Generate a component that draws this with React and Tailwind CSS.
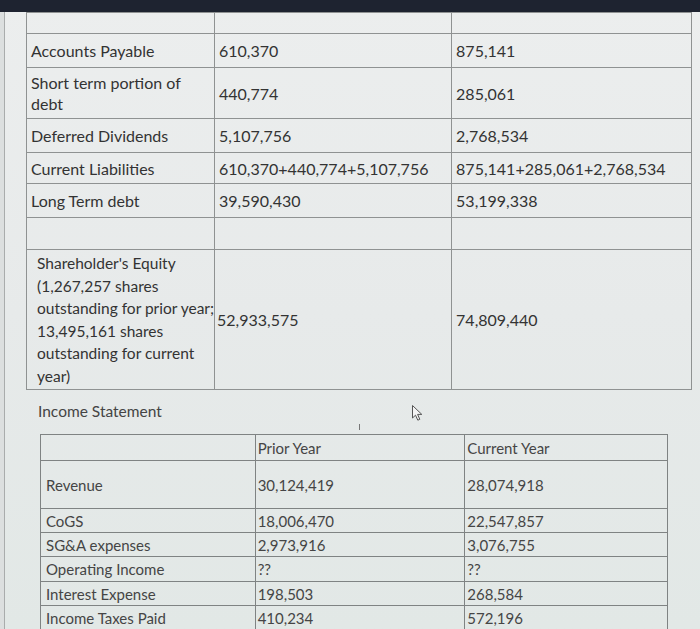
import React from 'react';

const balanceRows = [
  { label: '', prior: '', current: '', h: 'h-[21px]' },
  { label: 'Accounts Payable', prior: '610,370', current: '875,141', h: 'h-[34px]' },
  { label: 'Short term portion of debt', prior: '440,774', current: '285,061', h: 'h-[51px]' },
  { label: 'Deferred Dividends', prior: '5,107,756', current: '2,768,534', h: 'h-[34px]' },
  { label: 'Current Liabilities', prior: '610,370+440,774+5,107,756', current: '875,141+285,061+2,768,534', h: 'h-[31px]' },
  { label: 'Long Term debt', prior: '39,590,430', current: '53,199,338', h: 'h-[34px]' },
  { label: '', prior: '', current: '', h: 'h-[32px]' },
];

const incomeRows = [
  { label: '', prior: 'Prior Year', current: 'Current Year', h: 'h-[26px]' },
  { label: 'Revenue', prior: '30,124,419', current: '28,074,918', h: 'h-[48px]' },
  { label: 'CoGS', prior: '18,006,470', current: '22,547,857', h: 'h-[24px]' },
  { label: 'SG&A expenses', prior: '2,973,916', current: '3,076,755', h: 'h-[24px]' },
  { label: 'Operating Income', prior: '??', current: '??', h: 'h-[25px]' },
  { label: 'Interest Expense', prior: '198,503', current: '268,584', h: 'h-[24px]' },
  { label: 'Income Taxes Paid', prior: '410,234', current: '572,196', h: 'h-[24px]' },
];

const equityLines = [
  "Shareholder's Equity",
  '(1,267,257 shares',
  'outstanding for prior year;',
  '13,495,161 shares',
  'outstanding for current',
  'year)',
];

function Cursor() {
  return (
    <svg width="14" height="18" viewBox="0 0 14 18" className="absolute left-[411px] top-[404px]">
      <path d="M1.5 1.5 L1.5 14 L4.5 11.2 L6.8 16.2 L8.8 15.3 L6.6 10.4 L10.8 10.4 Z" fill="#f4f4f4" stroke="#555" strokeWidth="1" strokeLinejoin="round" />
    </svg>
  );
}

export default function App() {
  return (
    <div
      className="relative w-[700px] h-[629px] overflow-hidden bg-gradient-to-b from-[#eceeee] via-[#e7eaea] to-[#e2e8e6] text-[#333]"
      style={{ fontFamily: 'Lato, "Open Sans", sans-serif' }}
    >
      <div className="h-[12px] bg-[#1e2330]" />
      <div className="flex">
        <div className="w-[5px] self-stretch border-r border-[#a9acac] bg-[#dcdfdf]" />
        <div className="w-[21px]" />
        <div className="flex-1">
          <table className="w-[666px] border-collapse text-[16px] leading-[21px]">
            <colgroup>
              <col className="w-[187px]" />
              <col className="w-[238px]" />
              <col className="w-[241px]" />
            </colgroup>
            <tbody>
              {balanceRows.map((r, i) => (
                <tr key={i} className={r.h}>
                  <td className="border border-[#8f9292] px-[4px] align-middle">
                    <div className="max-w-[160px]">{r.label}</div>
                  </td>
                  <td className="border border-[#8f9292] px-[4px] align-middle">{r.prior}</td>
                  <td className="border border-[#8f9292] px-[4px] align-middle">{r.current}</td>
                </tr>
              ))}
              <tr className="h-[140px]">
                <td className="border border-[#8f9292] pl-[10px] pr-0 align-middle text-[15.5px] leading-[22.5px]">
                  {equityLines.map((l) => (
                    <div key={l} className="whitespace-nowrap">{l}</div>
                  ))}
                </td>
                <td className="border border-[#8f9292] px-[2px] align-middle">52,933,575</td>
                <td className="border border-[#8f9292] px-[4px] align-middle">74,809,440</td>
              </tr>
            </tbody>
          </table>

          <div className="pl-[12px] pt-[12px] text-[15.5px] leading-[18px] text-[#444]">Income Statement</div>

          <table className="ml-[14px] mt-[14px] w-[628px] border-collapse text-[15px] leading-[18px] text-[#454545]">
            <colgroup>
              <col className="w-[215px]" />
              <col className="w-[210px]" />
              <col className="w-[203px]" />
            </colgroup>
            <tbody>
              {incomeRows.map((r, i) => (
                <tr key={i} className={r.h}>
                  <td className="border border-[#7f8383] px-[5px] align-middle">{r.label}</td>
                  <td className="border border-[#7f8383] px-[2px] align-middle">{r.prior}</td>
                  <td className="border border-[#7f8383] px-[2px] align-middle">{r.current}</td>
                </tr>
              ))}
            </tbody>
          </table>
        </div>
      </div>
      <div className="absolute left-[359px] top-[424px] h-[6px] w-px bg-[#777]" />
      <Cursor />
    </div>
  );
}
